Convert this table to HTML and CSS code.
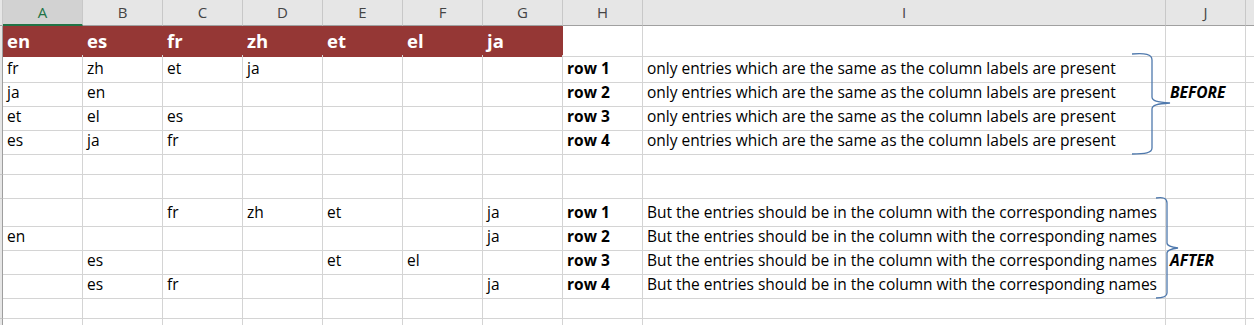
FILE: index.html
```html
<!DOCTYPE html>
<html>
<head>
  <meta charset="UTF-8">
  <title>Languages sheet</title>
  <link rel="stylesheet" href="styles.css">
</head>
<body>
  <div class="sheet" id="sheet">
    <div class="row head">
      <div class="cell corner"></div>
      <div class="cell sel">A</div><div class="cell">B</div><div class="cell">C</div>
      <div class="cell">D</div><div class="cell">E</div><div class="cell">F</div>
      <div class="cell">G</div><div class="cell">H</div><div class="cell">I</div>
      <div class="cell">J</div><div class="cell"></div>
    </div>
  </div>

  <svg class="braces" width="1254" height="325" viewBox="0 0 1254 325">
    <path d="M1132,54 C1145,53 1152,54 1152,60 L1152,97 C1152,101 1157,102 1170,103 C1157,104 1152,105 1152,109 L1152,148 C1152,153 1145,154 1132,154" />
    <path d="M1156,198 C1163,197 1167,198 1167,203 L1167,243 C1167,246 1171,247 1178,248 C1171,249 1167,250 1167,253 L1167,293 C1167,297 1163,298 1156,298" />
  </svg>

  <script>
    const before = "only entries which are the same as the column labels are present";
    const after = "But the entries should be in the column with the corresponding names";

    // A..J per row, empty string = blank cell
    const rows = [
      ["fr", "zh", "et", "ja", "", "", "", "row 1", before, ""],
      ["ja", "en", "", "", "", "", "", "row 2", before, "BEFORE"],
      ["et", "el", "es", "", "", "", "", "row 3", before, ""],
      ["es", "ja", "fr", "", "", "", "", "row 4", before, ""],
      [],
      [],
      ["", "", "fr", "zh", "et", "", "ja", "row 1", after, ""],
      ["en", "", "", "", "", "", "ja", "row 2", after, ""],
      ["", "es", "", "", "et", "el", "", "row 3", after, "AFTER"],
      ["", "es", "fr", "", "", "", "ja", "row 4", after, ""],
      [],
      []
    ];
    const labels = ["en", "es", "fr", "zh", "et", "el", "ja"];

    const sheet = document.getElementById("sheet");

    function makeRow(values, cls) {
      const row = document.createElement("div");
      row.className = "row " + (cls || "");
      row.innerHTML = '<div class="cell corner"></div>';
      for (let i = 0; i < 11; i++) {
        const cell = document.createElement("div");
        cell.className = "cell";
        if (i === 7) cell.classList.add("bold");
        if (i === 9) cell.classList.add("note");
        cell.textContent = values[i] || "";
        row.appendChild(cell);
      }
      return row;
    }

    const labelRow = makeRow(labels, "labels");
    labelRow.querySelectorAll(".cell:not(.corner)").forEach((c, i) => {
      if (i < 7) c.classList.add("red");
    });
    sheet.appendChild(labelRow);
    rows.forEach(r => sheet.appendChild(makeRow(r)));
  </script>
</body>
</html>
```

FILE: styles.css
```css
body {
  margin: 0;
  background: #fff;
  font-family: "Open Sans", sans-serif;
  font-size: 15.5px;
  color: #000;
  overflow: hidden;
}

.sheet {
  width: 1254px;
  height: 325px;
  overflow: hidden;
}

.row {
  display: grid;
  grid-template-columns: 3px repeat(8, 80px) 523px 80px 1fr;
  height: 24px;
}

.cell {
  box-sizing: border-box;
  border-right: 1px solid #d4d4d4;
  border-bottom: 1px solid #d4d4d4;
  padding: 0 4px;
  line-height: 27px;
  white-space: nowrap;
  overflow: visible;
}

.corner {
  padding: 0;
  background: #e6e6e6;
  border-right: 1px solid #9e9e9e;
  border-bottom-color: #c6c6c6;
}

/* column letters */
.head {
  height: 26px;
  background: #e6e6e6;
}

.head .cell {
  text-align: center;
  color: #444;
  line-height: 25px;
  background: #e6e6e6;
  border-right-color: #c8c8c8;
  border-bottom: 1px solid #a0a0a0;
  font-size: 15px;
}

.head .sel {
  background: #d2d2d2;
  color: #217346;
  border-bottom: 2px solid #217346;
  line-height: 24px;
}

.head .corner {
  border-bottom: 1px solid #a0a0a0;
}

.labels {
  height: 29px;
}

.labels .cell {
  font-size: 18.5px;
  font-weight: bold;
  line-height: 30px;
}

.red {
  background: #953735;
  color: #fff;
  border-right-color: #953735;
  border-bottom-color: #953735;
}

.bold {
  font-weight: bold;
}

.note {
  font-weight: bold;
  font-style: italic;
}

.braces {
  position: absolute;
  left: 0;
  top: 0;
  pointer-events: none;
}

.braces path {
  fill: none;
  stroke: #4f79ad;
  stroke-width: 1.3;
}
```
